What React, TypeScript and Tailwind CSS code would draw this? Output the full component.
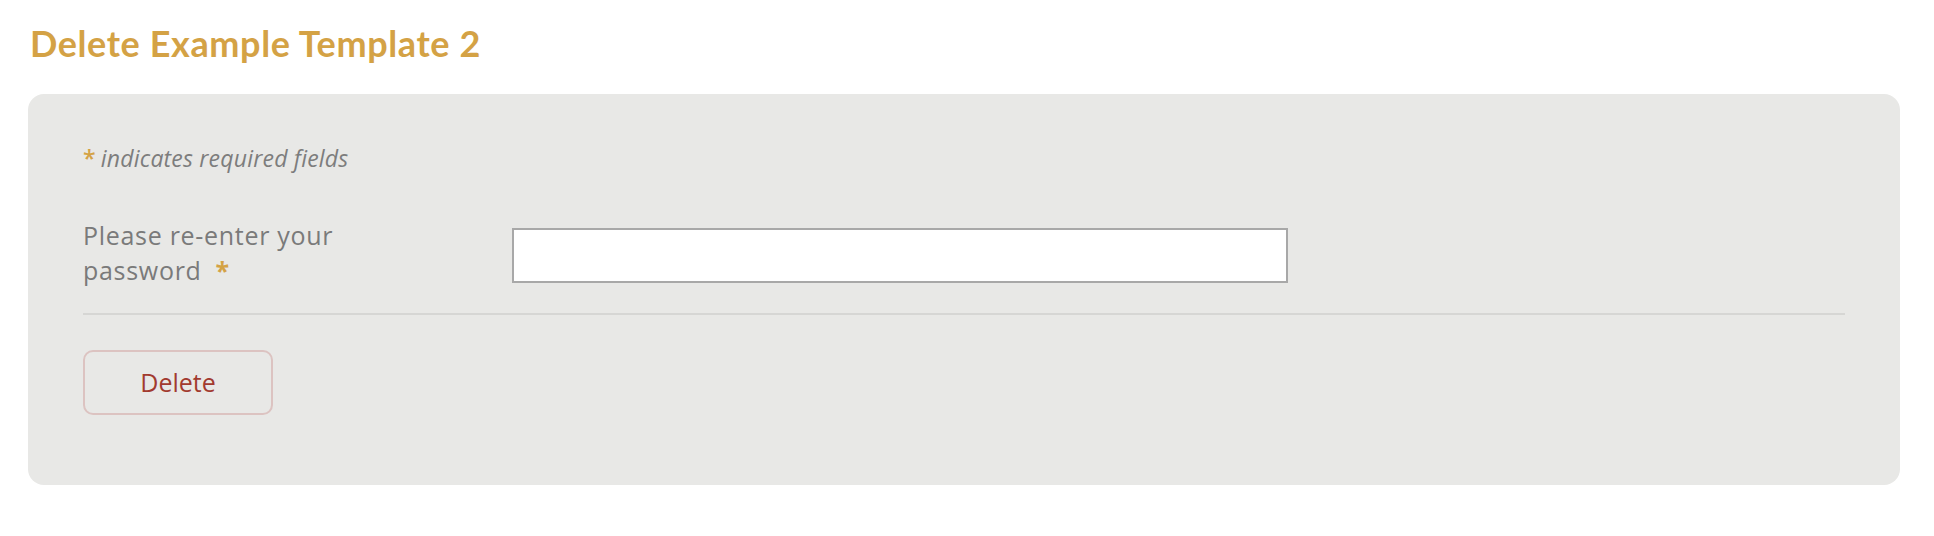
import React from "react";

const FONT = "font-['Lato','Open_Sans',sans-serif]";
const BODY = "font-['Open_Sans','Lato',sans-serif]";

function RequiredMark({ className = "" }: { className?: string }) {
  return <span className={`text-[#d4a245] not-italic leading-none ${className}`}>*</span>;
}

export default function App() {
  return (
    <div className={`${FONT} min-h-screen bg-white pl-[28px] pr-[34px] pt-[22px]`}>
      {/* Page title */}
      <h1 className="text-[36px] leading-[42px] font-bold tracking-[0.6px] text-[#d4a245] pl-[2px]">
        Delete Example Template 2
      </h1>

      {/* Form card */}
      <div className={`${BODY} mt-[30px] rounded-2xl bg-[#e8e8e6] px-[55px] pt-[50px] pb-[70px]`}>
        <p className="text-[23px] leading-[29px] italic tracking-[0.2px] text-[#7d7d7d]">
          <RequiredMark className="mr-[5px] font-semibold" />
          indicates required fields
        </p>

        <div className="mt-[45px] flex items-start">
          <label
            htmlFor="password"
            className="w-[429px] shrink-0 text-[25px] leading-[35px] tracking-[0.7px] text-[#7a7a7a]"
          >
            <span className="block max-w-[300px]">
              Please re-enter your password<RequiredMark className="ml-[14px] font-bold" />
            </span>
          </label>
          <input
            id="password"
            type="password"
            className="mt-[10px] h-[55px] w-[776px] border-2 border-[#a8a8a8] bg-white px-3 outline-none"
          />
        </div>

        <div className="mt-[25px] h-[2px] bg-[#d6d6d4]" />

        <button
          type="button"
          className="mt-[35px] flex h-[65px] w-[190px] items-center justify-center rounded-[10px] border-2 border-[#dcc3c1] text-[25px] font-medium text-[#a23a2f]"
        >
          Delete
        </button>
      </div>
    </div>
  );
}
